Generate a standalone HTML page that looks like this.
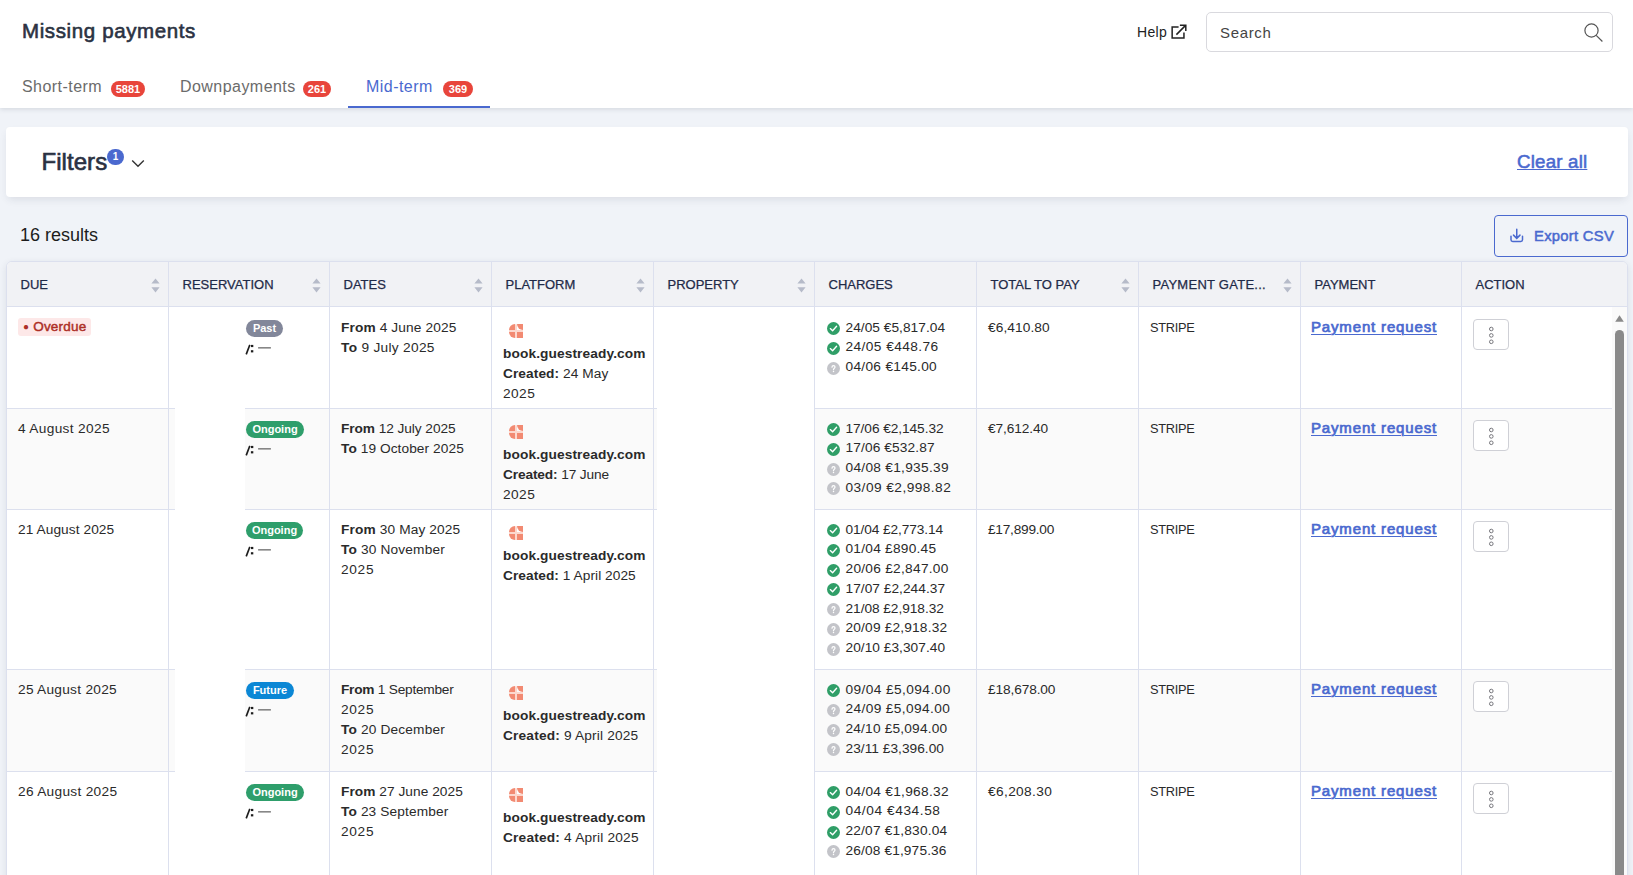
<!DOCTYPE html>
<html><head><meta charset="utf-8">
<style>
*{box-sizing:border-box;margin:0;padding:0}
html,body{width:1633px;height:875px;overflow:hidden}
body{background:#f0f3f8;font-family:"Liberation Sans",sans-serif;color:#262626;position:relative}
.abs{position:absolute}
#topbar{position:absolute;left:0;top:0;width:1633px;height:108px;background:#fff;box-shadow:0 1px 5px rgba(30,40,60,.15)}
.title{left:22px;top:19px;font-size:20.5px;font-weight:normal;-webkit-text-stroke:.6px #2b3242;letter-spacing:.62px;color:#2b3242;white-space:nowrap}
.tab{top:77.8px;font-size:16px;color:#6b6b6b;white-space:nowrap;letter-spacing:.45px}
.tab.act{color:#4a69cf}
.cnt{position:absolute;top:81px;height:16px;border-radius:8px;background:#e8453b;color:#fff;font-size:11px;font-weight:bold;text-align:center;line-height:16px}
.uline{left:348px;top:106px;width:142px;height:2px;background:#4a69cf}
.help{left:1137px;top:24px;font-size:14px;color:#222;letter-spacing:.3px}
.search{left:1206px;top:12px;width:407px;height:40px;border:1px solid #d9d9de;border-radius:5px;background:#fff}
.search span{position:absolute;left:13px;top:11px;font-size:15px;color:#444;letter-spacing:.65px}
.card{left:6px;top:127px;width:1622px;height:70px;background:#fff;border-radius:4px;box-shadow:0 4px 8px -2px rgba(40,50,70,.12)}
.filters{left:41.5px;top:148px;font-size:24px;font-weight:normal;-webkit-text-stroke:.65px #2a3142;color:#2a3142;letter-spacing:.05px}
.fbadge{left:107px;top:149px;width:17px;height:16px;border-radius:8px;background:#4a69cf;color:#fff;font-size:10px;font-weight:bold;text-align:center;line-height:16px}
.clear{left:1517px;top:151px;font-size:18.7px;font-weight:normal;-webkit-text-stroke:.55px #4a69cf;letter-spacing:.2px;color:#4a69cf;text-decoration:underline;text-underline-offset:1px;text-decoration-thickness:1px}
.results{left:20px;top:225px;font-size:18px;color:#1c1c1c}
.export{left:1494px;top:215px;width:134px;height:42px;border:1px solid #4a69cf;border-radius:4px}
.export span{position:absolute;left:39px;top:12px;font-size:14.8px;font-weight:normal;-webkit-text-stroke:.5px #4a69cf;color:#4a69cf;letter-spacing:.28px}
#tbl{position:absolute;left:6px;top:261px;width:1622px;height:620px;border:1px solid #dce0ee;border-radius:6px 6px 0 0;background:#fff;overflow:hidden;box-shadow:0 2px 7px rgba(40,50,70,.10)}
.hdr{position:absolute;left:0;top:0;width:1620px;height:45px;background:#f1f2f5;border-bottom:1px solid #dce0ee}
.vl{position:absolute;top:0;width:1px;height:700px;background:#dce0ee}
.hl{position:absolute;left:0;width:1605px;height:1px;background:#dce0ee}
.stripe{position:absolute;left:0;width:1605px;background:#fafafa}
.th{position:absolute;top:16px;font-size:13px;color:#1f2a48;white-space:nowrap;-webkit-text-stroke:.25px #1f2a48}
.sort{position:absolute;top:16px;width:9px;height:15px}
.td{position:absolute;font-size:13.7px;line-height:20px;color:#2a2a2a;white-space:nowrap;letter-spacing:.08px}
.td b{font-weight:bold}
.ov{position:absolute;background:#fff}
.badge{position:absolute;height:17px;border-radius:9px;color:#fff;font-size:11px;font-weight:bold;line-height:17px;text-align:center}
.chg{position:absolute;font-size:13.7px;line-height:19.8px;color:#2a2a2a;white-space:nowrap;letter-spacing:0px}
.chg>div{position:relative;padding-left:18.5px}
.chg svg{position:absolute;left:0;top:4.5px}
.ic{position:absolute;left:0;top:4px;width:13px;height:13px;border-radius:50%}
.ok{background:#2f9e67}
.q{background:#c4c4c8}
.link{position:absolute;font-size:15px;font-weight:normal;-webkit-text-stroke:.7px #4a69cf;color:#4a69cf;text-decoration:underline;text-decoration-thickness:1px;text-underline-offset:2px;white-space:nowrap;letter-spacing:.84px;margin-top:.5px}
.abtn{position:absolute;width:36px;height:31px;border:1px solid #cfd0d6;border-radius:4px;background:#fff}
.plat{position:absolute;width:14px;height:14px}
.scroll{position:absolute;left:1605px;top:45px;width:15px;height:600px;background:#fafafa}
</style></head><body>
<div id="topbar"></div>
<div class="abs title">Missing payments</div>
<div class="abs tab" style="left:22px">Short-term</div><div class="cnt" style="left:111px;width:34px">5881</div>
<div class="abs tab" style="left:180px">Downpayments</div><div class="cnt" style="left:303px;width:28px">261</div>
<div class="abs tab act" style="left:366px">Mid-term</div><div class="cnt" style="left:443px;width:30px">369</div>
<div class="abs uline"></div>
<div class="abs help">Help</div>
<svg class="abs" style="left:1170px;top:23px" width="18" height="17" viewBox="0 0 18 17"><path d="M8.6 3.95H2.15V15.05H13.95V9.4" fill="none" stroke="#222" stroke-width="1.5"/><path d="M6.4 11.6L15.6 2.4M9.9 2.2H15.8V8.1" fill="none" stroke="#222" stroke-width="1.5"/></svg>
<div class="abs search"><span>Search</span>
<svg class="abs" style="left:375px;top:9px" width="22" height="22" viewBox="0 0 22 22"><circle cx="9.5" cy="8.5" r="6.6" fill="none" stroke="#555" stroke-width="1.2"/><path d="M14.2 13.3l6.2 6.2" stroke="#555" stroke-width="1.2"/></svg>
</div>

<div class="abs card"></div>
<div class="abs filters">Filters</div>
<div class="abs fbadge">1</div>
<svg class="abs" style="left:131px;top:158px" width="14" height="10" viewBox="0 0 14 10"><path d="M1.2 2.4l5.8 5.8 5.8-5.8" fill="none" stroke="#333" stroke-width="1.4"/></svg>
<div class="abs clear">Clear all</div>

<div class="abs results">16 results</div>
<div class="abs export">
<svg class="abs" style="left:14px;top:12px" width="16" height="16" viewBox="0 0 16 16"><path d="M2 8.2V11.8Q2 13.5 3.7 13.5H11.8Q13.5 13.5 13.5 11.8V8.2" fill="none" stroke="#4a69cf" stroke-width="1.5" stroke-linecap="round"/><path d="M7.75 1.2V10M4.5 7.1L7.75 10.4L11 7.1" fill="none" stroke="#4a69cf" stroke-width="1.5" stroke-linecap="round"/></svg>
<span>Export CSV</span></div>

<div id="tbl">
<div class="hdr"></div>
<div class="stripe" style="top:147px;height:100px"></div>
<div class="stripe" style="top:408px;height:101px"></div>
<div class="hl" style="top:146px"></div>
<div class="hl" style="top:247px"></div>
<div class="hl" style="top:407px"></div>
<div class="hl" style="top:509px"></div>
<div class="vl" style="left:161px"></div>
<div class="vl" style="left:322px"></div>
<div class="vl" style="left:484px"></div>
<div class="vl" style="left:646px"></div>
<div class="vl" style="left:807px"></div>
<div class="vl" style="left:969px"></div>
<div class="vl" style="left:1131px"></div>
<div class="vl" style="left:1293px"></div>
<div class="vl" style="left:1454px"></div>
<div class="ov" style="left:168px;top:45px;width:70px;height:600px"></div>
<div class="ov" style="left:650px;top:45px;width:157px;height:600px"></div>
<div class="th" style="left:13.5px;top:14.5px">DUE</div>
<svg class="sort" style="left:144px;top:16px" width="9" height="15" viewBox="0 0 9 15"><path d="M4.5 0.6L8.6 5.6H0.4z M4.5 14.4L8.6 9.2H0.4z" fill="#b6bbc9"/></svg>
<div class="th" style="left:175.5px;top:14.5px">RESERVATION</div>
<svg class="sort" style="left:305px;top:16px" width="9" height="15" viewBox="0 0 9 15"><path d="M4.5 0.6L8.6 5.6H0.4z M4.5 14.4L8.6 9.2H0.4z" fill="#b6bbc9"/></svg>
<div class="th" style="left:336.5px;top:14.5px">DATES</div>
<svg class="sort" style="left:467px;top:16px" width="9" height="15" viewBox="0 0 9 15"><path d="M4.5 0.6L8.6 5.6H0.4z M4.5 14.4L8.6 9.2H0.4z" fill="#b6bbc9"/></svg>
<div class="th" style="left:498.5px;top:14.5px">PLATFORM</div>
<svg class="sort" style="left:629px;top:16px" width="9" height="15" viewBox="0 0 9 15"><path d="M4.5 0.6L8.6 5.6H0.4z M4.5 14.4L8.6 9.2H0.4z" fill="#b6bbc9"/></svg>
<div class="th" style="left:660.5px;top:14.5px">PROPERTY</div>
<svg class="sort" style="left:790px;top:16px" width="9" height="15" viewBox="0 0 9 15"><path d="M4.5 0.6L8.6 5.6H0.4z M4.5 14.4L8.6 9.2H0.4z" fill="#b6bbc9"/></svg>
<div class="th" style="left:821.5px;top:14.5px">CHARGES</div>
<div class="th" style="left:983.5px;top:14.5px">TOTAL TO PAY</div>
<svg class="sort" style="left:1114px;top:16px" width="9" height="15" viewBox="0 0 9 15"><path d="M4.5 0.6L8.6 5.6H0.4z M4.5 14.4L8.6 9.2H0.4z" fill="#b6bbc9"/></svg>
<div class="th" style="left:1145.5px;top:14.5px;letter-spacing:.26px">PAYMENT GATE...</div>
<svg class="sort" style="left:1276px;top:16px" width="9" height="15" viewBox="0 0 9 15"><path d="M4.5 0.6L8.6 5.6H0.4z M4.5 14.4L8.6 9.2H0.4z" fill="#b6bbc9"/></svg>
<div class="th" style="left:1307.5px;top:14.5px">PAYMENT</div>
<div class="th" style="left:1468.5px;top:14.5px">ACTION</div>
<div class="abs" style="left:11px;top:56px;width:73px;height:18px;background:#fde8e8;border-radius:3px"></div>
<div class="abs" style="left:16px;top:56px;font-size:13.5px;line-height:18px;font-weight:normal;-webkit-text-stroke:.45px #ad2f26;color:#ad2f26;letter-spacing:.2px;white-space:nowrap"><span style="font-size:10px;position:relative;top:-1.5px;-webkit-text-stroke:0">&#9679;</span> Overdue</div>
<div class="badge" style="left:239px;top:58px;width:37px;background:#82879a">Past</div>
<svg class="abs" style="left:238px;top:81px" width="28" height="13" viewBox="0 0 28 13"><path d="M4.8 1.9L1.2 11.4" stroke="#1d1d1d" stroke-width="1.6"/><rect x="5.9" y="1.9" width="2.4" height="2.2" fill="#1d1d1d"/><rect x="5.9" y="7.2" width="2.4" height="2.2" fill="#1d1d1d"/><rect x="13.1" y="4.2" width="12.8" height="1.3" fill="#6a6a6a"/></svg>
<div class="td" style="left:334px;top:55.5px"><div style="letter-spacing:0.127px"><b>From</b> 4 June 2025</div><div style="letter-spacing:0.303px"><b>To</b> 9 July 2025</div></div>
<div class="plat" style="left:502px;top:62px"><svg width="14" height="14" viewBox="0 0 14 14"><rect x="6" y="0.3" width="2" height="13.7" fill="#fcd8ce"/><rect x="0" y="6" width="14" height="2" fill="#fcd8ce"/><path d="M6 6H0A6 6 0 0 1 6 0z" fill="#f28a72"/><path d="M6 8V14A6 6 0 0 1 0 8z" fill="#f28a72"/><path d="M14 0V6A6 6 0 0 1 8 0z" fill="#f28a72"/><rect x="8" y="8" width="6" height="6" fill="#f28a72"/></svg></div>
<div class="td pl" style="left:496px;top:81.5px"><div style="letter-spacing:0.108px"><b>book.guestready.com</b></div><div style="letter-spacing:0.080px"><b>Created:</b> 24 May</div><div style="letter-spacing:0.447px">2025</div></div>
<div class="chg" style="left:820px;top:55.5px"><div><svg width="13" height="13" viewBox="0 0 13 13"><circle cx="6.5" cy="6.5" r="6.5" fill="#2f9e67"/><path d="M3.3 6.6L5.6 8.8L9.6 4.3" fill="none" stroke="#fff" stroke-width="1.35" stroke-linecap="round" stroke-linejoin="round"/></svg><span style="letter-spacing:0.043px">24/05 €5,817.04</span></div><div><svg width="13" height="13" viewBox="0 0 13 13"><circle cx="6.5" cy="6.5" r="6.5" fill="#2f9e67"/><path d="M3.3 6.6L5.6 8.8L9.6 4.3" fill="none" stroke="#fff" stroke-width="1.35" stroke-linecap="round" stroke-linejoin="round"/></svg><span style="letter-spacing:0.433px">24/05 €448.76</span></div><div><svg width="13" height="13" viewBox="0 0 13 13"><circle cx="6.5" cy="6.5" r="6.5" fill="#c3c4c9"/><path d="M5 5.2Q5 3.6 6.5 3.6Q8 3.6 8 5Q8 5.9 7.1 6.4Q6.5 6.8 6.5 7.7" fill="none" stroke="#fff" stroke-width="1.25" stroke-linecap="round"/><circle cx="6.5" cy="9.5" r="0.75" fill="#fff"/></svg><span style="letter-spacing:0.308px">04/06 €145.00</span></div></div>
<div class="td" style="left:981px;top:55.5px;letter-spacing:0.092px">€6,410.80</div>
<div class="td" style="left:1143px;top:56.0px;font-size:12.8px;letter-spacing:-.3px">STRIPE</div>
<div class="link" style="left:1304px;top:55.5px">Payment request</div>
<div class="abtn" style="left:1466px;top:57px"><div class="abs" style="left:13px;top:5px"><svg width="8" height="20" viewBox="0 0 8 20"><circle cx="4.3" cy="4" r="1.8" fill="none" stroke="#76767c" stroke-width="1"/><circle cx="4.3" cy="10.4" r="1.8" fill="none" stroke="#76767c" stroke-width="1"/><circle cx="4.3" cy="16.8" r="1.8" fill="none" stroke="#76767c" stroke-width="1"/></svg></div></div>
<div class="td" style="left:11px;top:156.5px;letter-spacing:0.333px">4 August 2025</div>
<div class="badge" style="left:239px;top:159px;width:58px;background:#2e9e6b">Ongoing</div>
<svg class="abs" style="left:238px;top:182px" width="28" height="13" viewBox="0 0 28 13"><path d="M4.8 1.9L1.2 11.4" stroke="#1d1d1d" stroke-width="1.6"/><rect x="5.9" y="1.9" width="2.4" height="2.2" fill="#1d1d1d"/><rect x="5.9" y="7.2" width="2.4" height="2.2" fill="#1d1d1d"/><rect x="13.1" y="4.2" width="12.8" height="1.3" fill="#6a6a6a"/></svg>
<div class="td" style="left:334px;top:156.5px"><div style="letter-spacing:-0.064px"><b>From</b> 12 July 2025</div><div style="letter-spacing:0.074px"><b>To</b> 19 October 2025</div></div>
<div class="plat" style="left:502px;top:163px"><svg width="14" height="14" viewBox="0 0 14 14"><rect x="6" y="0.3" width="2" height="13.7" fill="#fcd8ce"/><rect x="0" y="6" width="14" height="2" fill="#fcd8ce"/><path d="M6 6H0A6 6 0 0 1 6 0z" fill="#f28a72"/><path d="M6 8V14A6 6 0 0 1 0 8z" fill="#f28a72"/><path d="M14 0V6A6 6 0 0 1 8 0z" fill="#f28a72"/><rect x="8" y="8" width="6" height="6" fill="#f28a72"/></svg></div>
<div class="td pl" style="left:496px;top:182.5px"><div style="letter-spacing:0.108px"><b>book.guestready.com</b></div><div style="letter-spacing:-0.127px"><b>Created:</b> 17 June</div><div style="letter-spacing:0.447px">2025</div></div>
<div class="chg" style="left:820px;top:156.5px"><div><svg width="13" height="13" viewBox="0 0 13 13"><circle cx="6.5" cy="6.5" r="6.5" fill="#2f9e67"/><path d="M3.3 6.6L5.6 8.8L9.6 4.3" fill="none" stroke="#fff" stroke-width="1.35" stroke-linecap="round" stroke-linejoin="round"/></svg><span style="letter-spacing:-0.064px">17/06 €2,145.32</span></div><div><svg width="13" height="13" viewBox="0 0 13 13"><circle cx="6.5" cy="6.5" r="6.5" fill="#2f9e67"/><path d="M3.3 6.6L5.6 8.8L9.6 4.3" fill="none" stroke="#fff" stroke-width="1.35" stroke-linecap="round" stroke-linejoin="round"/></svg><span style="letter-spacing:0.133px">17/06 €532.87</span></div><div><svg width="13" height="13" viewBox="0 0 13 13"><circle cx="6.5" cy="6.5" r="6.5" fill="#c3c4c9"/><path d="M5 5.2Q5 3.6 6.5 3.6Q8 3.6 8 5Q8 5.9 7.1 6.4Q6.5 6.8 6.5 7.7" fill="none" stroke="#fff" stroke-width="1.25" stroke-linecap="round"/><circle cx="6.5" cy="9.5" r="0.75" fill="#fff"/></svg><span style="letter-spacing:0.293px">04/08 €1,935.39</span></div><div><svg width="13" height="13" viewBox="0 0 13 13"><circle cx="6.5" cy="6.5" r="6.5" fill="#c3c4c9"/><path d="M5 5.2Q5 3.6 6.5 3.6Q8 3.6 8 5Q8 5.9 7.1 6.4Q6.5 6.8 6.5 7.7" fill="none" stroke="#fff" stroke-width="1.25" stroke-linecap="round"/><circle cx="6.5" cy="9.5" r="0.75" fill="#fff"/></svg><span style="letter-spacing:0.450px">03/09 €2,998.82</span></div></div>
<div class="td" style="left:981px;top:156.5px;letter-spacing:-0.095px">€7,612.40</div>
<div class="td" style="left:1143px;top:157.0px;font-size:12.8px;letter-spacing:-.3px">STRIPE</div>
<div class="link" style="left:1304px;top:156.5px">Payment request</div>
<div class="abtn" style="left:1466px;top:158px"><div class="abs" style="left:13px;top:5px"><svg width="8" height="20" viewBox="0 0 8 20"><circle cx="4.3" cy="4" r="1.8" fill="none" stroke="#76767c" stroke-width="1"/><circle cx="4.3" cy="10.4" r="1.8" fill="none" stroke="#76767c" stroke-width="1"/><circle cx="4.3" cy="16.8" r="1.8" fill="none" stroke="#76767c" stroke-width="1"/></svg></div></div>
<div class="td" style="left:11px;top:257.5px;letter-spacing:0.077px">21 August 2025</div>
<div class="badge" style="left:239px;top:260px;width:57px;background:#2e9e6b">Ongoing</div>
<svg class="abs" style="left:238px;top:283px" width="28" height="13" viewBox="0 0 28 13"><path d="M4.8 1.9L1.2 11.4" stroke="#1d1d1d" stroke-width="1.6"/><rect x="5.9" y="1.9" width="2.4" height="2.2" fill="#1d1d1d"/><rect x="5.9" y="7.2" width="2.4" height="2.2" fill="#1d1d1d"/><rect x="13.1" y="4.2" width="12.8" height="1.3" fill="#6a6a6a"/></svg>
<div class="td" style="left:334px;top:257.5px"><div style="letter-spacing:0.133px"><b>From</b> 30 May 2025</div><div style="letter-spacing:0.157px"><b>To</b> 30 November</div><div style="letter-spacing:0.680px">2025</div></div>
<div class="plat" style="left:502px;top:264px"><svg width="14" height="14" viewBox="0 0 14 14"><rect x="6" y="0.3" width="2" height="13.7" fill="#fcd8ce"/><rect x="0" y="6" width="14" height="2" fill="#fcd8ce"/><path d="M6 6H0A6 6 0 0 1 6 0z" fill="#f28a72"/><path d="M6 8V14A6 6 0 0 1 0 8z" fill="#f28a72"/><path d="M14 0V6A6 6 0 0 1 8 0z" fill="#f28a72"/><rect x="8" y="8" width="6" height="6" fill="#f28a72"/></svg></div>
<div class="td pl" style="left:496px;top:283.5px"><div style="letter-spacing:0.108px"><b>book.guestready.com</b></div><div style="letter-spacing:0.055px"><b>Created:</b> 1 April 2025</div></div>
<div class="chg" style="left:820px;top:257.5px"><div><svg width="13" height="13" viewBox="0 0 13 13"><circle cx="6.5" cy="6.5" r="6.5" fill="#2f9e67"/><path d="M3.3 6.6L5.6 8.8L9.6 4.3" fill="none" stroke="#fff" stroke-width="1.35" stroke-linecap="round" stroke-linejoin="round"/></svg><span style="letter-spacing:-0.100px">01/04 £2,773.14</span></div><div><svg width="13" height="13" viewBox="0 0 13 13"><circle cx="6.5" cy="6.5" r="6.5" fill="#2f9e67"/><path d="M3.3 6.6L5.6 8.8L9.6 4.3" fill="none" stroke="#fff" stroke-width="1.35" stroke-linecap="round" stroke-linejoin="round"/></svg><span style="letter-spacing:0.250px">01/04 £890.45</span></div><div><svg width="13" height="13" viewBox="0 0 13 13"><circle cx="6.5" cy="6.5" r="6.5" fill="#2f9e67"/><path d="M3.3 6.6L5.6 8.8L9.6 4.3" fill="none" stroke="#fff" stroke-width="1.35" stroke-linecap="round" stroke-linejoin="round"/></svg><span style="letter-spacing:0.279px">20/06 £2,847.00</span></div><div><svg width="13" height="13" viewBox="0 0 13 13"><circle cx="6.5" cy="6.5" r="6.5" fill="#2f9e67"/><path d="M3.3 6.6L5.6 8.8L9.6 4.3" fill="none" stroke="#fff" stroke-width="1.35" stroke-linecap="round" stroke-linejoin="round"/></svg><span style="letter-spacing:0.043px">17/07 £2,244.37</span></div><div><svg width="13" height="13" viewBox="0 0 13 13"><circle cx="6.5" cy="6.5" r="6.5" fill="#c3c4c9"/><path d="M5 5.2Q5 3.6 6.5 3.6Q8 3.6 8 5Q8 5.9 7.1 6.4Q6.5 6.8 6.5 7.7" fill="none" stroke="#fff" stroke-width="1.25" stroke-linecap="round"/><circle cx="6.5" cy="9.5" r="0.75" fill="#fff"/></svg><span style="letter-spacing:-0.043px">21/08 £2,918.32</span></div><div><svg width="13" height="13" viewBox="0 0 13 13"><circle cx="6.5" cy="6.5" r="6.5" fill="#c3c4c9"/><path d="M5 5.2Q5 3.6 6.5 3.6Q8 3.6 8 5Q8 5.9 7.1 6.4Q6.5 6.8 6.5 7.7" fill="none" stroke="#fff" stroke-width="1.25" stroke-linecap="round"/><circle cx="6.5" cy="9.5" r="0.75" fill="#fff"/></svg><span style="letter-spacing:0.186px">20/09 £2,918.32</span></div><div><svg width="13" height="13" viewBox="0 0 13 13"><circle cx="6.5" cy="6.5" r="6.5" fill="#c3c4c9"/><path d="M5 5.2Q5 3.6 6.5 3.6Q8 3.6 8 5Q8 5.9 7.1 6.4Q6.5 6.8 6.5 7.7" fill="none" stroke="#fff" stroke-width="1.25" stroke-linecap="round"/><circle cx="6.5" cy="9.5" r="0.75" fill="#fff"/></svg><span style="letter-spacing:0.043px">20/10 £3,307.40</span></div></div>
<div class="td" style="left:981px;top:257.5px;letter-spacing:-0.242px">£17,899.00</div>
<div class="td" style="left:1143px;top:258.0px;font-size:12.8px;letter-spacing:-.3px">STRIPE</div>
<div class="link" style="left:1304px;top:257.5px">Payment request</div>
<div class="abtn" style="left:1466px;top:259px"><div class="abs" style="left:13px;top:5px"><svg width="8" height="20" viewBox="0 0 8 20"><circle cx="4.3" cy="4" r="1.8" fill="none" stroke="#76767c" stroke-width="1"/><circle cx="4.3" cy="10.4" r="1.8" fill="none" stroke="#76767c" stroke-width="1"/><circle cx="4.3" cy="16.8" r="1.8" fill="none" stroke="#76767c" stroke-width="1"/></svg></div></div>
<div class="td" style="left:11px;top:417.5px;letter-spacing:0.269px">25 August 2025</div>
<div class="badge" style="left:239px;top:420px;width:48px;background:#0b87d5">Future</div>
<svg class="abs" style="left:238px;top:443px" width="28" height="13" viewBox="0 0 28 13"><path d="M4.8 1.9L1.2 11.4" stroke="#1d1d1d" stroke-width="1.6"/><rect x="5.9" y="1.9" width="2.4" height="2.2" fill="#1d1d1d"/><rect x="5.9" y="7.2" width="2.4" height="2.2" fill="#1d1d1d"/><rect x="13.1" y="4.2" width="12.8" height="1.3" fill="#6a6a6a"/></svg>
<div class="td" style="left:334px;top:417.5px"><div style="letter-spacing:-0.240px"><b>From</b> 1 September</div><div style="letter-spacing:0.680px">2025</div><div style="letter-spacing:0.157px"><b>To</b> 20 December</div><div style="letter-spacing:0.680px">2025</div></div>
<div class="plat" style="left:502px;top:424px"><svg width="14" height="14" viewBox="0 0 14 14"><rect x="6" y="0.3" width="2" height="13.7" fill="#fcd8ce"/><rect x="0" y="6" width="14" height="2" fill="#fcd8ce"/><path d="M6 6H0A6 6 0 0 1 6 0z" fill="#f28a72"/><path d="M6 8V14A6 6 0 0 1 0 8z" fill="#f28a72"/><path d="M14 0V6A6 6 0 0 1 8 0z" fill="#f28a72"/><rect x="8" y="8" width="6" height="6" fill="#f28a72"/></svg></div>
<div class="td pl" style="left:496px;top:443.5px"><div style="letter-spacing:0.108px"><b>book.guestready.com</b></div><div style="letter-spacing:0.180px"><b>Created:</b> 9 April 2025</div></div>
<div class="chg" style="left:820px;top:417.5px"><div><svg width="13" height="13" viewBox="0 0 13 13"><circle cx="6.5" cy="6.5" r="6.5" fill="#2f9e67"/><path d="M3.3 6.6L5.6 8.8L9.6 4.3" fill="none" stroke="#fff" stroke-width="1.35" stroke-linecap="round" stroke-linejoin="round"/></svg><span style="letter-spacing:0.414px">09/04 £5,094.00</span></div><div><svg width="13" height="13" viewBox="0 0 13 13"><circle cx="6.5" cy="6.5" r="6.5" fill="#c3c4c9"/><path d="M5 5.2Q5 3.6 6.5 3.6Q8 3.6 8 5Q8 5.9 7.1 6.4Q6.5 6.8 6.5 7.7" fill="none" stroke="#fff" stroke-width="1.25" stroke-linecap="round"/><circle cx="6.5" cy="9.5" r="0.75" fill="#fff"/></svg><span style="letter-spacing:0.386px">24/09 £5,094.00</span></div><div><svg width="13" height="13" viewBox="0 0 13 13"><circle cx="6.5" cy="6.5" r="6.5" fill="#c3c4c9"/><path d="M5 5.2Q5 3.6 6.5 3.6Q8 3.6 8 5Q8 5.9 7.1 6.4Q6.5 6.8 6.5 7.7" fill="none" stroke="#fff" stroke-width="1.25" stroke-linecap="round"/><circle cx="6.5" cy="9.5" r="0.75" fill="#fff"/></svg><span style="letter-spacing:0.193px">24/10 £5,094.00</span></div><div><svg width="13" height="13" viewBox="0 0 13 13"><circle cx="6.5" cy="6.5" r="6.5" fill="#c3c4c9"/><path d="M5 5.2Q5 3.6 6.5 3.6Q8 3.6 8 5Q8 5.9 7.1 6.4Q6.5 6.8 6.5 7.7" fill="none" stroke="#fff" stroke-width="1.25" stroke-linecap="round"/><circle cx="6.5" cy="9.5" r="0.75" fill="#fff"/></svg><span style="letter-spacing:0.036px">23/11 £3,396.00</span></div></div>
<div class="td" style="left:981px;top:417.5px;letter-spacing:-0.120px">£18,678.00</div>
<div class="td" style="left:1143px;top:418.0px;font-size:12.8px;letter-spacing:-.3px">STRIPE</div>
<div class="link" style="left:1304px;top:417.5px">Payment request</div>
<div class="abtn" style="left:1466px;top:419px"><div class="abs" style="left:13px;top:5px"><svg width="8" height="20" viewBox="0 0 8 20"><circle cx="4.3" cy="4" r="1.8" fill="none" stroke="#76767c" stroke-width="1"/><circle cx="4.3" cy="10.4" r="1.8" fill="none" stroke="#76767c" stroke-width="1"/><circle cx="4.3" cy="16.8" r="1.8" fill="none" stroke="#76767c" stroke-width="1"/></svg></div></div>
<div class="td" style="left:11px;top:519.5px;letter-spacing:0.300px">26 August 2025</div>
<div class="badge" style="left:239px;top:522px;width:58px;background:#2e9e6b">Ongoing</div>
<svg class="abs" style="left:238px;top:545px" width="28" height="13" viewBox="0 0 28 13"><path d="M4.8 1.9L1.2 11.4" stroke="#1d1d1d" stroke-width="1.6"/><rect x="5.9" y="1.9" width="2.4" height="2.2" fill="#1d1d1d"/><rect x="5.9" y="7.2" width="2.4" height="2.2" fill="#1d1d1d"/><rect x="13.1" y="4.2" width="12.8" height="1.3" fill="#6a6a6a"/></svg>
<div class="td" style="left:334px;top:519.5px"><div style="letter-spacing:0.049px"><b>From</b> 27 June 2025</div><div style="letter-spacing:0.123px"><b>To</b> 23 September</div><div style="letter-spacing:0.680px">2025</div></div>
<div class="plat" style="left:502px;top:526px"><svg width="14" height="14" viewBox="0 0 14 14"><rect x="6" y="0.3" width="2" height="13.7" fill="#fcd8ce"/><rect x="0" y="6" width="14" height="2" fill="#fcd8ce"/><path d="M6 6H0A6 6 0 0 1 6 0z" fill="#f28a72"/><path d="M6 8V14A6 6 0 0 1 0 8z" fill="#f28a72"/><path d="M14 0V6A6 6 0 0 1 8 0z" fill="#f28a72"/><rect x="8" y="8" width="6" height="6" fill="#f28a72"/></svg></div>
<div class="td pl" style="left:496px;top:545.5px"><div style="letter-spacing:0.108px"><b>book.guestready.com</b></div><div style="letter-spacing:0.195px"><b>Created:</b> 4 April 2025</div></div>
<div class="chg" style="left:820px;top:519.5px"><div><svg width="13" height="13" viewBox="0 0 13 13"><circle cx="6.5" cy="6.5" r="6.5" fill="#2f9e67"/><path d="M3.3 6.6L5.6 8.8L9.6 4.3" fill="none" stroke="#fff" stroke-width="1.35" stroke-linecap="round" stroke-linejoin="round"/></svg><span style="letter-spacing:0.293px">04/04 €1,968.32</span></div><div><svg width="13" height="13" viewBox="0 0 13 13"><circle cx="6.5" cy="6.5" r="6.5" fill="#2f9e67"/><path d="M3.3 6.6L5.6 8.8L9.6 4.3" fill="none" stroke="#fff" stroke-width="1.35" stroke-linecap="round" stroke-linejoin="round"/></svg><span style="letter-spacing:0.575px">04/04 €434.58</span></div><div><svg width="13" height="13" viewBox="0 0 13 13"><circle cx="6.5" cy="6.5" r="6.5" fill="#2f9e67"/><path d="M3.3 6.6L5.6 8.8L9.6 4.3" fill="none" stroke="#fff" stroke-width="1.35" stroke-linecap="round" stroke-linejoin="round"/></svg><span style="letter-spacing:0.193px">22/07 €1,830.04</span></div><div><svg width="13" height="13" viewBox="0 0 13 13"><circle cx="6.5" cy="6.5" r="6.5" fill="#c3c4c9"/><path d="M5 5.2Q5 3.6 6.5 3.6Q8 3.6 8 5Q8 5.9 7.1 6.4Q6.5 6.8 6.5 7.7" fill="none" stroke="#fff" stroke-width="1.25" stroke-linecap="round"/><circle cx="6.5" cy="9.5" r="0.75" fill="#fff"/></svg><span style="letter-spacing:0.143px">26/08 €1,975.36</span></div></div>
<div class="td" style="left:981px;top:519.5px;letter-spacing:0.367px">€6,208.30</div>
<div class="td" style="left:1143px;top:520.0px;font-size:12.8px;letter-spacing:-.3px">STRIPE</div>
<div class="link" style="left:1304px;top:519.5px">Payment request</div>
<div class="abtn" style="left:1466px;top:521px"><div class="abs" style="left:13px;top:5px"><svg width="8" height="20" viewBox="0 0 8 20"><circle cx="4.3" cy="4" r="1.8" fill="none" stroke="#76767c" stroke-width="1"/><circle cx="4.3" cy="10.4" r="1.8" fill="none" stroke="#76767c" stroke-width="1"/><circle cx="4.3" cy="16.8" r="1.8" fill="none" stroke="#76767c" stroke-width="1"/></svg></div></div>
<div class="scroll"></div>
<svg class="abs" style="left:1608px;top:53px" width="9" height="7" viewBox="0 0 9 7"><path d="M4.5 0.3L8.8 6.8H0.2z" fill="#8a8a8a"/></svg>
<div class="abs" style="left:1608px;top:68px;width:9px;height:700px;border-radius:4.5px;background:#8a8a8a"></div>
</div>
</body></html>
